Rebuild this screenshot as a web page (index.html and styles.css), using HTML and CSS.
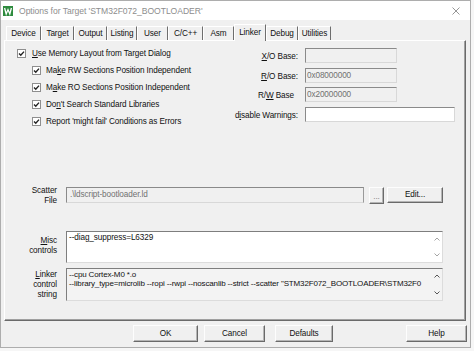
FILE: index.html
```html
<!DOCTYPE html>
<html>
<head>
<meta charset="utf-8">
<link rel="stylesheet" href="styles.css">
</head>
<body>
<div class="window">
  <div class="titlebar">
    <svg class="appicon" viewBox="0 0 10 10" width="10" height="10">
      <rect x="0" y="0" width="10" height="10" fill="#2e8b3e"/>
      <polyline points="1.6,2 3.2,8 5,3.6 6.8,8 8.4,2" fill="none" stroke="#fff" stroke-width="1.3"/>
    </svg>
    <span class="title">Options for Target 'STM32F072_BOOTLOADER'</span>
    <svg class="close" viewBox="0 0 8 8" width="8" height="8">
      <path d="M0.5 0.5 L7.5 7.5 M7.5 0.5 L0.5 7.5" stroke="#8a8a8a" stroke-width="0.9"/>
    </svg>
  </div>

  <div class="tabs">
    <span class="tab t-device">Device</span>
    <span class="tab t-target">Target</span>
    <span class="tab t-output">Output</span>
    <span class="tab t-listing">Listing</span>
    <span class="tab t-user">User</span>
    <span class="tab t-cc">C/C++</span>
    <span class="tab t-asm">Asm</span>
    <span class="tab sel t-linker">Linker</span>
    <span class="tab t-debug">Debug</span>
    <span class="tab t-util">Utilities</span>
  </div>

  <div class="panel">
    <div class="top">
      <div class="checks">
        <div class="cbrow"><span class="cb"><svg viewBox="0 0 7 7" width="7" height="7"><polyline points="1,3.4 2.8,5.3 6,1.6" fill="none" stroke="#222" stroke-width="1.4"/></svg></span><span><u>U</u>se Memory Layout from Target Dialog</span></div>
        <div class="cbrow sub"><span class="cb"><svg viewBox="0 0 7 7" width="7" height="7"><polyline points="1,3.4 2.8,5.3 6,1.6" fill="none" stroke="#222" stroke-width="1.4"/></svg></span><span>Ma<u>k</u>e RW Sections Position Independent</span></div>
        <div class="cbrow sub"><span class="cb"><svg viewBox="0 0 7 7" width="7" height="7"><polyline points="1,3.4 2.8,5.3 6,1.6" fill="none" stroke="#222" stroke-width="1.4"/></svg></span><span>M<u>a</u>ke RO Sections Position Independent</span></div>
        <div class="cbrow sub"><span class="cb"><svg viewBox="0 0 7 7" width="7" height="7"><polyline points="1,3.4 2.8,5.3 6,1.6" fill="none" stroke="#222" stroke-width="1.4"/></svg></span><span>Do<u>n</u>'t Search Standard Libraries</span></div>
        <div class="cbrow sub"><span class="cb"><svg viewBox="0 0 7 7" width="7" height="7"><polyline points="1,3.4 2.8,5.3 6,1.6" fill="none" stroke="#222" stroke-width="1.4"/></svg></span><span>Report 'might fail' Conditions as Errors</span></div>
      </div>
      <div class="fields">
        <span class="flabel"><u>X</u>/O Base:</span>
        <span class="field short"></span>
        <span class="flabel"><u>R</u>/O Base:</span>
        <span class="field short">0x08000000</span>
        <span class="flabel nocolon">R/<u>W</u> Base</span>
        <span class="field short">0x20000000</span>
        <span class="flabel">d<u>i</u>sable Warnings:</span>
        <span class="field white"></span>
      </div>
    </div>

    <div class="row scatter">
      <div class="rlabel">Scatter<br>File</div>
      <div class="field scatterfile">.\ldscript-bootloader.ld</div>
      <div class="btn dots">...</div>
      <div class="btn edit">Edit...</div>
    </div>

    <div class="row misc">
      <div class="rlabel"><u>M</u>isc<br>controls</div>
      <div class="memo white">
        <div class="memotext">--diag_suppress=L6329</div>
        <div class="scroll">
          <svg viewBox="0 0 6 4" width="6" height="4"><polyline points="0.5,3.5 3,1 5.5,3.5" fill="none" stroke="#9a9a9a" stroke-width="0.9"/></svg>
          <svg viewBox="0 0 6 4" width="6" height="4"><polyline points="0.5,0.5 3,3 5.5,0.5" fill="none" stroke="#9a9a9a" stroke-width="0.9"/></svg>
        </div>
      </div>
    </div>

    <div class="row linker">
      <div class="rlabel"><u>L</u>inker<br>control<br>string</div>
      <div class="memo ro">
        <div class="memotext">--cpu Cortex-M0 *.o<br>--library_type=microlib --ropi --rwpi --noscanlib --strict --scatter "STM32F072_BOOTLOADER\STM32F0</div>
        <div class="scroll">
          <svg viewBox="0 0 6 4" width="6" height="4"><polyline points="0.5,3.5 3,1 5.5,3.5" fill="none" stroke="#444" stroke-width="0.9"/></svg>
          <svg viewBox="0 0 6 4" width="6" height="4"><polyline points="0.5,0.5 3,3 5.5,0.5" fill="none" stroke="#444" stroke-width="0.9"/></svg>
        </div>
      </div>
    </div>
  </div>

  <div class="buttons">
    <div class="btn b-ok">OK</div>
    <div class="btn b-cancel">Cancel</div>
    <div class="btn b-defaults">Defaults</div>
    <div class="btn b-help">Help</div>
  </div>
</div>
</body>
</html>
```
FILE: styles.css
```css
body {
  margin: 0;
  background: #f6f6f6;
  font-family: "Liberation Sans", Arial, sans-serif;
  font-size: 8.2px;
  letter-spacing: -0.1px;
  color: #111;
}
u { text-decoration-thickness: 1px; text-underline-offset: 1px; }

.window {
  width: 471px;
  height: 348px;
  box-sizing: border-box;
  border: 1px solid #adadad;
  background: #f0f0f0;
  display: flex;
  flex-direction: column;
}

.titlebar {
  height: 19px;
  flex: none;
  background: #fff;
  display: flex;
  align-items: center;
  padding-left: 2px;
}
.appicon { flex: none; margin-right: 6px; margin-top: 0; }
.title {
  flex: 1;
  font-size: 8.6px;
  letter-spacing: -0.05px;
  color: #8d8d8d;
}
.close { flex: none; margin-right: 10px; }

.tabs {
  flex: none;
  height: 16px;
  margin-top: 4px;
  padding-left: 5px;
  display: flex;
  align-items: flex-end;
}
.tab {
  box-sizing: border-box;
  height: 14px;
  line-height: 13px;
  text-align: center;
  border-top: 1px solid #fff;
  border-left: 1px solid #fff;
  border-right: 1px solid #6e6e6e;
  white-space: nowrap;
}
.tab.sel {
  height: 17px;
  line-height: 15px;
  margin-bottom: -1px;
  background: #f0f0f0;
  position: relative;
  z-index: 1;
}
.t-device { width: 35px; }
.t-target { width: 33px; }
.t-output { width: 33px; }
.t-listing { width: 30px; }
.t-user { width: 31px; }
.t-cc { width: 35px; }
.t-asm { width: 31px; }
.t-linker { width: 32px; }
.t-debug { width: 32px; }
.t-util { width: 33px; }

.panel {
  flex: none;
  box-sizing: border-box;
  margin-left: 3px;
  width: 462px;
  height: 281px;
  border-top: 1px solid #fff;
  border-left: 1px solid #fff;
  border-right: 1px solid #6a6a6a;
  border-bottom: 1px solid #6a6a6a;
  box-shadow: inset -1px -1px 0 #a0a0a0;
  display: flex;
  flex-direction: column;
}

.top { display: flex; height: 88px; flex: none; }
.checks { width: 220px; padding-top: 4px; box-sizing: border-box; }
.cbrow {
  height: 17px;
  display: flex;
  align-items: center;
  padding-left: 12px;
  white-space: nowrap;
}
.cbrow.sub { padding-left: 27px; }
.cb {
  flex: none;
  width: 9px;
  height: 9px;
  box-sizing: border-box;
  border: 1px solid #8e8e8e;
  background: #fff;
  margin-right: 6px;
  display: flex;
  align-items: center;
  justify-content: center;
}
.cb svg { display: block; }
.cbrow.sub .cb { margin-right: 5px; }

.fields {
  display: grid;
  grid-template-columns: 73px 150px;
  grid-auto-rows: 15px;
  row-gap: 4.6px;
  column-gap: 7px;
  padding-top: 7px;
}
.flabel {
  text-align: right;
  line-height: 17px;
  white-space: nowrap;
}
.flabel.nocolon { padding-right: 4px; }

.field {
  box-sizing: border-box;
  height: 15px;
  border: 1px solid;
  border-color: #8a8a8a #d8d8d8 #d8d8d8 #8a8a8a;
  background: #f0f0f0;
  color: #707070;
  padding-left: 1px;
  line-height: 13px;
  white-space: nowrap;
  overflow: hidden;
}
.field.short { width: 92px; }
.field.white { background: #fff; }

.row { display: flex; flex: none; align-items: flex-start; }
.rlabel {
  flex: none;
  width: 52px;
  margin-right: 9px;
  text-align: right;
  line-height: 10px;
}
.scatter { margin-top: 57px; height: 20px; }
.scatterfile {
  width: 298px;
  height: 16px;
  margin-top: 1px;
  padding-left: 3px;
  border-color: #8a8a8a #9a9a9a #d8d8d8 #8a8a8a;
  line-height: 14px;
}
.btn {
  box-sizing: border-box;
  border: 1px solid;
  border-color: #fdfdfd #6a6a6a #6a6a6a #fdfdfd;
  box-shadow: inset -1px -1px 0 #b5b5b5;
  background: #f0f0f0;
  text-align: center;
  white-space: nowrap;
}
.dots { width: 15px; height: 17px; margin-left: 5px; margin-top: 1px; line-height: 18px; color: #888; }
.edit { width: 56px; height: 16px; margin-left: 3px; margin-top: 1px; line-height: 13px; }

.misc { margin-top: 25px; height: 32px; }
.misc .rlabel { margin-top: 5px; }
.memo {
  box-sizing: border-box;
  width: 377px;
  height: 32px;
  border: 1px solid;
  border-color: #7e7e7e #dcdcdc #dcdcdc #7e7e7e;
  display: flex;
}
.memo.white { background: #fff; }
.memo.ro { background: #f3f3f3; height: 33px; }
.memotext {
  flex: 1;
  min-width: 0;
  overflow: hidden;
  white-space: nowrap;
  padding: 1px 0 0 2px;
  line-height: 9px;
}
.misc .memotext { padding-top: 1px; line-height: 10px; }
.linker .memotext { padding-top: 2px; line-height: 8.5px; font-size: 8px; letter-spacing: -0.14px; }
.scroll {
  flex: none;
  width: 11px;
  display: flex;
  flex-direction: column;
  align-items: center;
  justify-content: space-between;
  padding: 5px 0 5px;
  box-sizing: border-box;
}
.scroll svg { display: block; }
.linker { margin-top: 5px; height: 33px; }
.linker .rlabel { margin-top: 2px; }

.buttons {
  flex: none;
  display: flex;
  height: 17px;
  margin-top: 4px;
  padding-left: 132px;
}
.buttons .btn { height: 17px; line-height: 15px; }
.b-ok { width: 65px; }
.b-cancel { width: 61px; margin-left: 6px; }
.b-defaults { width: 58px; margin-left: 10px; }
.b-help { width: 61px; margin-left: 73px; }
```
